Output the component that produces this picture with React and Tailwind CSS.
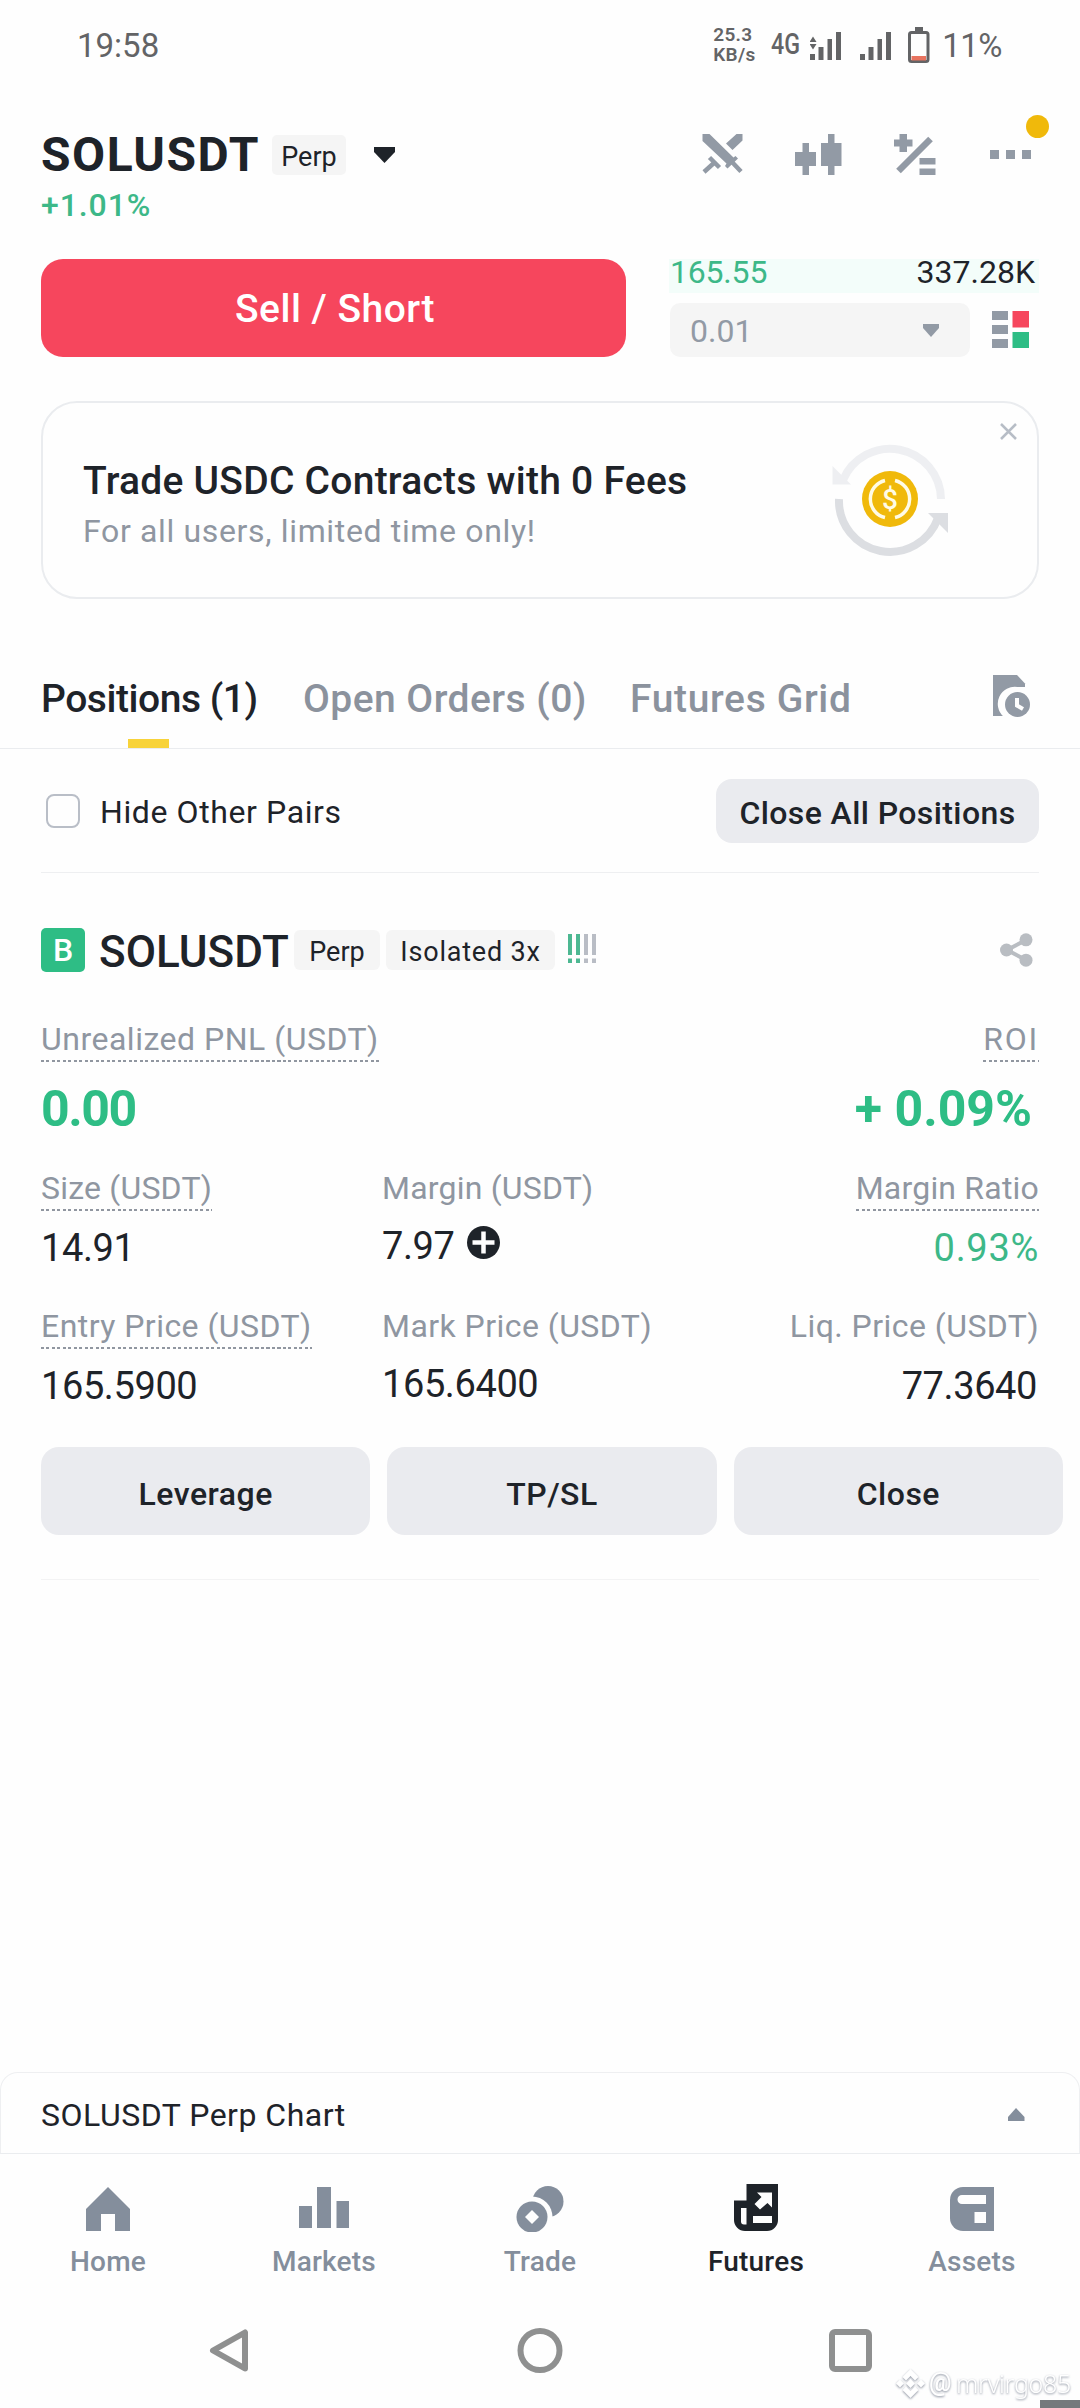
const stats = [
  [
    { label: "Size (USDT)", value: "14.91", dotted: true },
    { label: "Margin (USDT)", value: "7.97", add: true },
    { label: "Margin Ratio", value: "0.93%", dotted: true, green: true },
  ],
  [
    { label: "Entry Price (USDT)", value: "165.5900", dotted: true },
    { label: "Mark Price (USDT)", value: "165.6400" },
    { label: "Liq. Price (USDT)", value: "77.3640" },
  ],
];

const tabs = [
  { name: "Home", icon: <HomeIcon /> },
  { name: "Markets", icon: <MarketsIcon /> },
  { name: "Trade", icon: <TradeIcon /> },
  { name: "Futures", icon: <FuturesIcon />, active: true },
  { name: "Assets", icon: <AssetsIcon /> },
];

function HomeIcon() {
  return (
    <svg width="48" height="48" fill="currentColor">
      <path d="M24 3L46 25V47H31V30H17V47H2V25Z" />
    </svg>
  );
}

function MarketsIcon() {
  return (
    <svg width="50" height="48" fill="currentColor">
      <path d="M0 22h13v22H0zM18 3h14v41H18zM37.500 17H50v27H37.500z" />
    </svg>
  );
}

function TradeIcon() {
  return (
    <svg width="48" height="48" fill="currentColor">
      <circle cx="32" cy="17.500" r="15.500" />
      <circle cx="16" cy="33" r="20.500" fill="#fefefe" />
      <circle cx="16" cy="33" r="15.500" />
      <path d="M16 26l7 7-7 7-7-7z" fill="#fefefe" />
    </svg>
  );
}

function FuturesIcon() {
  return (
    <svg width="48" height="48" fill="currentColor">
      <path d="M14.500 0H46V36a11 11 0 0 1-11 11H13A11 11 0 0 1 2 36V16.500H14.500Z" />
      <path
        d="M9 24h5.500v16.500H12a3 3 0 0 1-3-3zM21 32h19v7H21zM25 8.500H40V23.500L35.500 19L28 25.500L22.500 20L29.500 13Z"
        fill="#fefefe"
      />
    </svg>
  );
}

function AssetsIcon() {
  return (
    <svg width="48" height="48" fill="currentColor">
      <path d="M15 3H46V47H15A13 13 0 0 1 2 34V16A13 13 0 0 1 15 3Z" />
      <path d="M14 11H38v9H14a4.500 4.500 0 0 1 0-9zM26.500 28H38v11H26.500z" fill="#fefefe" />
    </svg>
  );
}

function SwordsIcon() {
  return (
    <svg width="41" height="41" fill="#929aa5" stroke="#929aa5">
      <path
        d="M.5 0H7.500L31.500 23.500L33.500 22L36 24.500L25.500 34.500L23 32L24.500 29.500L.5 7ZM40.500 0H34.500L24 9.500L30.500 16L40.500 6.500Z"
        stroke="none"
      />
      <path d="M30 28L39 37.500M7.500 23.500L17.500 33.500M12.500 28.500L2 38" strokeWidth="4.500" fill="none" />
    </svg>
  );
}

function CandlesIcon() {
  return (
    <svg width="47" height="41" fill="#929aa5">
      <path d="M0 18h21v14H0zM7.500 9H14v32H7.500zM26 9h20.500v23H26zM33 0h6.500v41H33z" />
    </svg>
  );
}

function CalcIcon() {
  return (
    <svg width="42" height="41" fill="#929aa5">
      <path d="M5.500 0H13v18H5.500zM0 5.500h18.500v7H0zM25.500 24H41.500v6.500h-16zM25.500 34.500h16V41h-16z" />
      <path d="M36.500 5L4.500 37" stroke="#929aa5" strokeWidth="6.500" />
    </svg>
  );
}

function Signal({ data }) {
  return (
    <svg width="31" height="28" fill="#636466">
      <path d="M0 22h5v6H0zM8.500 15h5v13h-5zM17.500 7H22v21h-4.500zM26 0h5v28h-5z" />
      {data && <path d="M3 4.500L6.500 10H-.5zM3 17.500L-.5 12h7z" />}
    </svg>
  );
}

function StatusBar() {
  return (
    <div className="h-[91px] pl-[77px] pr-[78px] flex items-center justify-between text-[#636466] text-[33px]">
      <span>19:58</span>
      <div className="flex items-center">
        <div className="w-[58px] pb-px text-[19px] leading-[20px] font-semibold tracking-[0.3px]">
          <p>25.3</p>
          <p>KB/s</p>
        </div>
        <span className="w-[39px] text-[29px] font-medium origin-left scale-x-80 -translate-y-px">4G</span>
        <Signal data />
        <span className="w-[19px]" />
        <Signal />
        <svg className="ml-[17px] mr-[12px] mb-[2px]" width="22" height="36">
          <path d="M7 0h8v5H7z" fill="#636466" />
          <rect x="1.500" y="5.500" width="18.500" height="29" rx="2" fill="none" stroke="#636466" strokeWidth="3" />
          <path d="M3.500 29h14.500v4.500H3.500z" fill="#e8735f" />
        </svg>
        <span className="tracking-[-0.5px]">11%</span>
      </div>
    </div>
  );
}

function Header() {
  return (
    <header className="mt-[40px]">
      <div className="h-[47px] flex items-center justify-between">
        <div className="flex items-center">
          <h1 className="w-[231px] text-[48px] leading-none font-bold tracking-[1.5px]">SOLUSDT</h1>
          <span className="w-[74px] h-[40px] pt-[3px] rounded-[5px] bg-[#f5f5f5] text-[27px] leading-[38px] text-center">
            Perp
          </span>
          <svg className="ml-[28px]" width="22" height="16" fill="#1e2329">
            <path d="M0 0H21V5L10.500 16L0 5Z" />
          </svg>
        </div>
        <div className="flex items-center pr-[8px]">
          <SwordsIcon />
          <span className="w-[52px]" />
          <CandlesIcon />
          <span className="w-[52px]" />
          <CalcIcon />
          <span className="w-[54px]" />
          <div className="relative flex gap-[7px]">
            <i className="size-[9px] bg-[#929aa5]" />
            <i className="size-[9px] bg-[#929aa5]" />
            <i className="size-[9px] bg-[#929aa5]" />
            <i className="absolute left-[36px] -top-[35px] size-[23px] rounded-full bg-[#f0b90b]" />
          </div>
        </div>
      </div>
      <p className="mt-[7px] h-[38px] text-[32px] leading-[40px] font-medium tracking-[0.9px] text-[#3db888]">+1.01%</p>
    </header>
  );
}

function TradeRow() {
  return (
    <section className="mt-[36px] h-[98px] flex">
      <button className="w-[585px] pt-[2px] pl-[3px] rounded-[22px] bg-[#f6465d] text-white text-[39px] font-medium tracking-[0.5px]">
        Sell / Short
      </button>
      <div className="ml-[43px] w-[370px]">
        <div className="h-[34px] pl-px pr-[4px] flex justify-between bg-[#f3fdfa] text-[32px] leading-[27px]">
          <span className="tracking-[-0.2px] text-[#3db888]">165.55</span>
          <span>337.28K</span>
        </div>
        <div className="mt-[10px] flex items-center">
          <div className="w-[300px] h-[54px] ml-px pl-[20px] pr-[31px] rounded-[10px] bg-[#f5f5f5] flex items-center justify-between">
            <span className="pt-[2px] text-[32px] leading-none text-[#929aa5]">0.01</span>
            <svg width="16" height="13" fill="#929aa5">
              <path d="M0 0H16V4L8 13L0 4Z" />
            </svg>
          </div>
          <svg className="ml-[22px] shrink-0" width="38" height="38">
            <path d="M0 0h16v9H0zM0 14h16v9H0zM0 28h16v9H0z" fill="#929aa5" />
            <path d="M20.500 0H37v16.500H20.500z" fill="#f6465d" />
            <path d="M20.500 21H37v16H20.500z" fill="#2ebd85" />
          </svg>
        </div>
      </div>
    </section>
  );
}

function Banner() {
  return (
    <section className="relative mt-[44px] h-[198px] pl-[40px] pr-[88px] flex items-center justify-between rounded-[36px] border-2 border-[#eaecef]">
      <div className="pt-[11px]">
        <h2 className="text-[39px] leading-[50px] font-medium tracking-[0.25px]">Trade USDC Contracts with 0 Fees</h2>
        <p className="text-[32px] leading-[50px] tracking-[0.65px] text-[#8f96a1]">
          For all users, limited time only!
        </p>
      </div>
      <svg width="117" height="116" fill="none">
        <path d="M109 57A51 51 0 0 0 11 38" stroke="#eeeff2" strokeWidth="8" />
        <path d="M.5 24L19 42.500H.5Z" fill="#eeeff2" />
        <path d="M7 57A51 51 0 0 0 106 76" stroke="#dcdee2" strokeWidth="8" />
        <path d="M96 71H116V91Z" fill="#dcdee2" />
        <circle cx="58" cy="57" r="28" fill="#f0b90b" />
        <path d="M53 38.500A19 19 0 0 0 53 75.500M63 38.500A19 19 0 0 1 63 75.500" stroke="#fffbe6" strokeWidth="3.500" />
        <text x="58" y="67" textAnchor="middle" fontSize="28" fontWeight="500" fill="#fffbe6">
          $
        </text>
      </svg>
      <svg className="absolute right-[20px] top-[20px]" width="17" height="17" stroke="#b7bdc6" strokeWidth="2.500">
        <path d="M1 1L16 16M16 1L1 16" />
      </svg>
    </section>
  );
}

function OrderTabs() {
  return (
    <nav className="mt-[61px] h-[89px] px-[41px] flex border-b border-[#eaecef] text-[39px] leading-[79px] font-medium text-[#8b929d]">
      <span className="relative w-[262px] tracking-[-0.45px] text-[#1e2329]">
        Positions (1)
        <i className="absolute left-[87px] bottom-0 w-[41px] h-[9px] bg-[#f8d33a]" />
      </span>
      <span className="w-[327px] tracking-[0.45px]">Open Orders (0)</span>
      <span className="flex-1 tracking-[0.65px]">Futures Grid</span>
      <svg className="mt-[15px] mr-[8px]" width="39" height="43" fill="#929aa5">
        <path d="M1 0H25L33 8.500V41H1Z" />
        <path d="M25.500 12a17 17 0 0 0-14 29.500H39V12z" fill="#fefefe" />
        <circle cx="25.500" cy="29.500" r="12.500" />
        <path d="M25 23V30.500L31 34" stroke="#fefefe" strokeWidth="4" fill="none" />
      </svg>
    </nav>
  );
}

function FilterRow() {
  return (
    <div className="h-[124px] flex items-center justify-between border-b border-[#eeeff1]">
      <label className="flex items-center text-[32px] tracking-[0.6px]">
        <i className="ml-[5px] mr-[20px] size-[34px] rounded-[8px] border-[2.500px] border-[#b9bec7]" />
        <span className="pt-[3px]">Hide Other Pairs</span>
      </label>
      <button className="w-[323px] h-[64px] pt-[4px] rounded-[16px] bg-[#eaebef] text-[32px] font-medium tracking-[0.4px]">
        Close All Positions
      </button>
    </div>
  );
}

const underline = "h-[2px] bg-[repeating-linear-gradient(90deg,#9096a0_0_3px,transparent_3px_5.500px)]";

function Label({ children, dotted, className = "tracking-[0.4px]" }) {
  return (
    <div className={"w-fit text-[32px] text-[#8f96a1] " + className}>
      <p className="h-[42px] leading-[42px] whitespace-nowrap">{children}</p>
      <div className={dotted ? underline : "h-[2px]"} />
    </div>
  );
}

function Stat({ item, index }) {
  return (
    <div className={index === 2 ? "flex flex-col items-end" : "flex flex-col items-start"}>
      <Label dotted={item.dotted} className={item.label.includes("Price") ? "tracking-[0.45px]" : "tracking-[0.2px]"}>
        {item.label}
      </Label>
      <div className={index === 1 ? "mt-[11px] h-[50px] flex items-start" : "mt-[13px] h-[48px] flex items-start"}>
        <span
          className={
            item.green
              ? "text-[38px] leading-[49px] tracking-[0.7px] text-[#3db888]"
              : "pr-[2px] text-[38px] leading-[49px] tracking-[-0.400px]"
          }
        >
          {item.value}
        </span>
        {item.add && (
          <svg className="ml-[10px] mt-[4px]" width="33" height="33">
            <circle cx="16.500" cy="16.500" r="16.500" fill="#1e2329" />
            <path d="M16.500 5.500V27.500M5.500 16.500H27.500" stroke="#fefefe" strokeWidth="4.500" />
          </svg>
        )}
      </div>
    </div>
  );
}

function Position() {
  return (
    <section>
      <div className="mt-[54px] h-[46px] flex items-center">
        <span className="w-[44px] h-[44px] rounded-[5px] bg-[#2ebd85] text-white text-[32px] leading-[45px] font-medium text-center">
          B
        </span>
        <h2 className="ml-[14px] w-[195px] text-[44px] leading-[50px] pt-[4px] font-medium">SOLUSDT</h2>
        <span className="w-[86px] h-[40px] rounded-[6px] bg-[#f5f5f5] text-[27px] leading-[44px] text-center">Perp</span>
        <span className="ml-[6px] w-[169px] h-[40px] rounded-[6px] bg-[#f5f5f5] text-[27px] leading-[44px] text-center tracking-[0.8px]">
          Isolated 3x
        </span>
        <svg className="ml-[13px] mb-[2px]" width="29" height="30">
          <path d="M0 0h4v21H0zM8 0h4v21H8zM0 24.500h4V29H0zM8 24.500h4V29H8z" fill="#4db892" />
          <path d="M16 0h4v21h-4zM24 0h4v21h-4zM16 24.500h4V29h-4zM24 24.500h4V29h-4z" fill="#b9bdc5" />
        </svg>
        <svg className="ml-auto mr-[6px]" width="33" height="34" fill="#b9bdc2" stroke="#b9bdc2">
          <path d="M26 7L7 17L26 27" strokeWidth="4" fill="none" />
          <circle cx="6.500" cy="17" r="6.500" stroke="none" />
          <circle cx="26" cy="6.800" r="6.500" stroke="none" />
          <circle cx="26" cy="27.200" r="6.500" stroke="none" />
        </svg>
      </div>

      <div className="mt-[45px] flex justify-between">
        <Label dotted className="tracking-[0.5px]">
          Unrealized PNL (USDT)
        </Label>
        <Label dotted className="tracking-[1.8px]">
          ROI
        </Label>
      </div>
      <div className="mt-[20px] h-[52px] flex justify-between text-[50px] leading-[55px] font-bold text-[#2ebd85]">
        <span className="tracking-[-1.5px]">0.00</span>
        <span className="pr-[7px]">+ 0.09%</span>
      </div>

      {stats.map((row, i) => (
        <div key={i} className="mt-[33px] grid grid-cols-[341px_1fr_auto]">
          {row.map((item, j) => (
            <Stat key={item.label} item={item} index={j} />
          ))}
        </div>
      ))}

      <div className="mt-[37px] w-[1022px] h-[88px] grid grid-cols-3 gap-[17px] text-[32px] font-medium tracking-[0.5px]">
        <button className="rounded-[18px] bg-[#eaebef] pt-[5px]">Leverage</button>
        <button className="rounded-[18px] bg-[#eaebef] pt-[5px]">TP/SL</button>
        <button className="rounded-[18px] bg-[#eaebef] pt-[5px]">Close</button>
      </div>
      <div className="mt-[44px] h-px bg-[#f3f3f4]" />
    </section>
  );
}

function BottomNav() {
  return (
    <nav className="pt-[30px] grid grid-cols-5">
      {tabs.map((tab) => (
        <div
          key={tab.name}
          className={
            tab.active ? "flex flex-col items-center text-[#1e2329]" : "flex flex-col items-center text-[#848e9c]"
          }
        >
          {tab.icon}
          <span className="mt-[13px] text-[28px] leading-[33px] font-medium tracking-[0.2px]">{tab.name}</span>
        </div>
      ))}
    </nav>
  );
}

function SystemNav() {
  return (
    <div className="mt-[39px] mb-[24px] h-[67px] flex items-center justify-center gap-[263px]">
      <svg width="48" height="48" fill="none" stroke="#8f9090" strokeWidth="6" strokeLinejoin="round">
        <path d="M40 5.500V41.500L8 23.500Z" />
      </svg>
      <svg width="48" height="48" fill="none" stroke="#8f9090" strokeWidth="6">
        <circle cx="24" cy="23.500" r="19.500" />
      </svg>
      <svg width="48" height="48" fill="none" stroke="#8f9090" strokeWidth="6">
        <rect x="5" y="5" width="37" height="37" rx="3" />
      </svg>
    </div>
  );
}

function Watermark() {
  return (
    <div className="absolute right-[9px] bottom-[9px] flex items-center text-white drop-shadow-[0_1px_1px_rgba(90,100,120,0.7)]">
      <svg className="mr-[4px]" width="29" height="29" fill="currentColor">
        <path d="M14.500 0L22.500 8L19 11.500L14.500 7L10 11.500L6.500 8ZM14.500 29L22.500 21L19 17.500L14.500 22L10 17.500L6.500 21ZM4 10.500L8 14.500L4 18.500L0 14.500ZM25 10.500L29 14.500L25 18.500L21 14.500ZM14.500 10L19 14.500L14.500 19L10 14.500Z" />
      </svg>
      <span className="w-[27px] text-[25px] leading-[32px] font-medium">@</span>
      <span className="text-[25px] leading-[32px] font-light font-['Noto_Sans',sans-serif] tracking-[-0.3px]">
        mrvirgo85
      </span>
    </div>
  );
}

export default function App() {
  return (
    <div className="relative w-[1080px] h-[2408px] overflow-hidden flex flex-col bg-[#fefefe] text-[#1e2329] font-['Roboto',sans-serif]">
      <StatusBar />
      <div className="px-[41px]">
        <Header />
        <TradeRow />
        <Banner />
      </div>
      <OrderTabs />
      <div className="px-[41px] flex-1">
        <FilterRow />
        <Position />
      </div>

      {/* Chart drawer */}
      <div className="border-b border-[#eaecef]">
        <div className="h-[81px] pt-[3px] pl-[40px] pr-[54px] flex items-center justify-between rounded-t-[18px] border border-b-0 border-[#eeeff1]">
          <span className="text-[32px] tracking-[0.5px]">SOLUSDT Perp Chart</span>
          <svg width="17" height="13" fill="#848e9c">
            <path d="M8 0L16.500 9V13H0V9Z" />
          </svg>
        </div>
      </div>
      <BottomNav />
      <SystemNav />
      <Watermark />
      <div className="absolute right-0 bottom-0 w-[40px] h-[8px] bg-[#75797c]" />
    </div>
  );
}
